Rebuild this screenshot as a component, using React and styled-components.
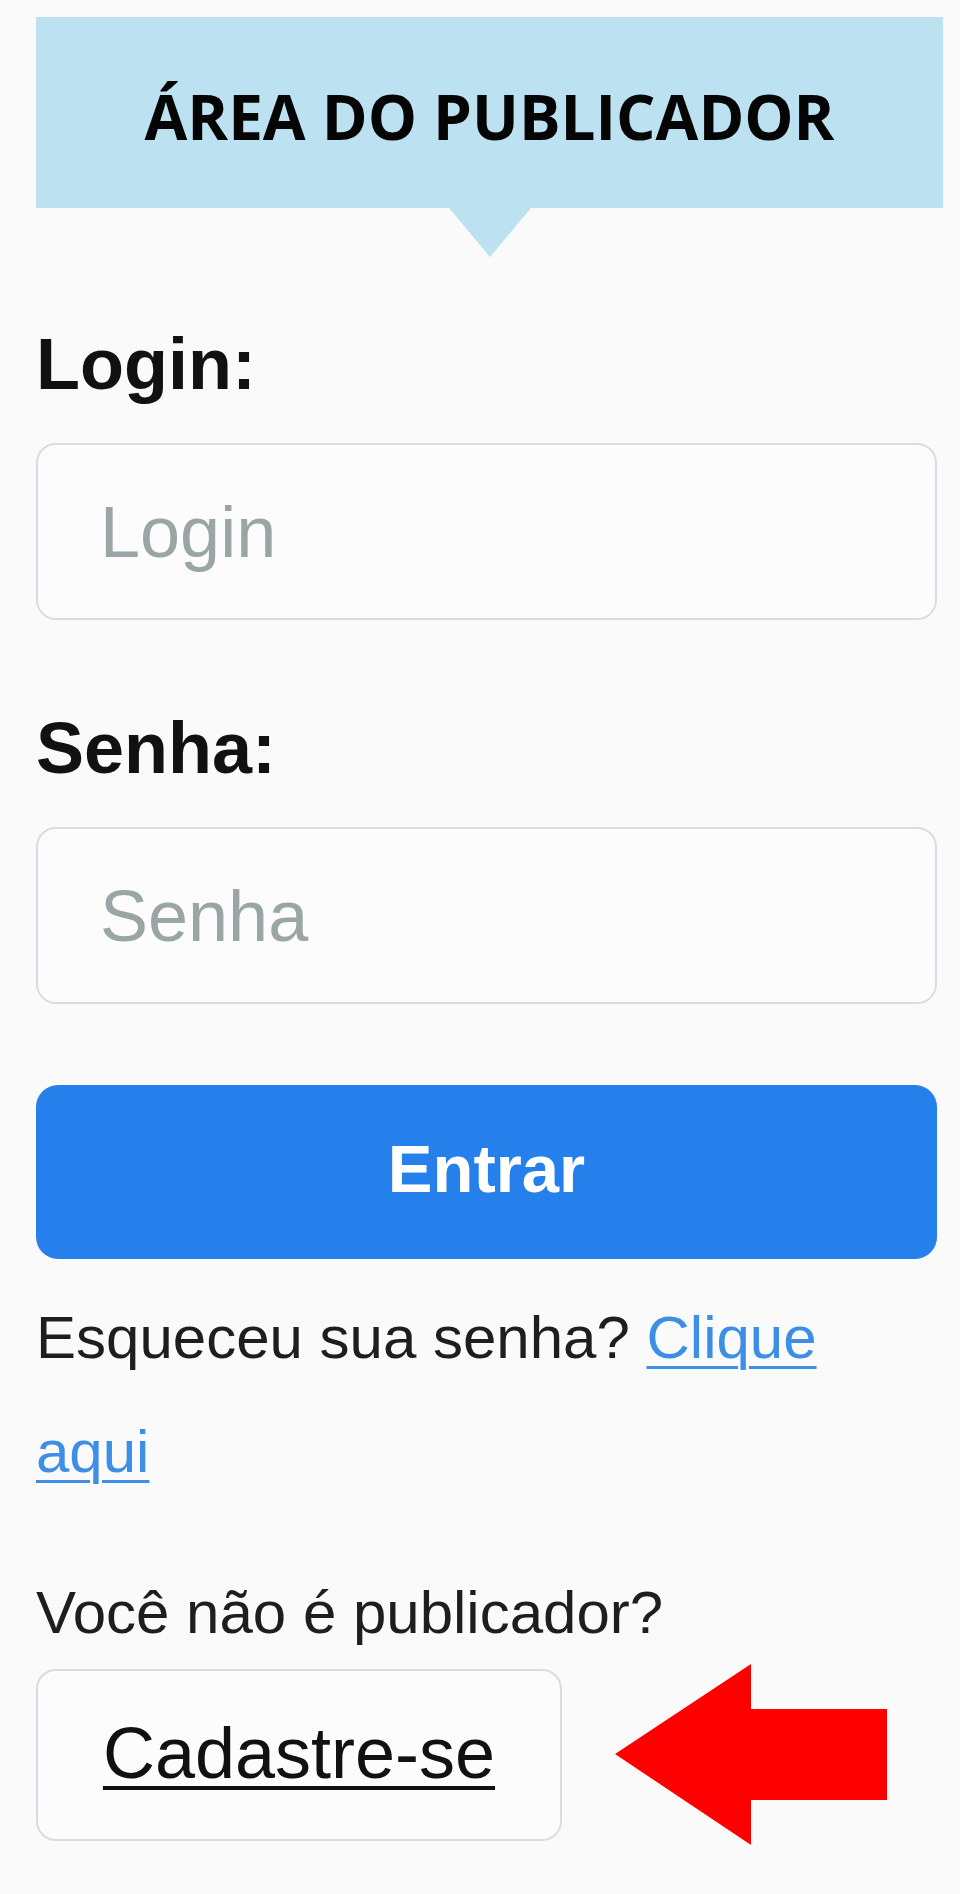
import React from "react";
import styled, { createGlobalStyle } from "styled-components";

const Global = createGlobalStyle`
  html, body { margin: 0; padding: 0; background: #fafafa; }
  body { font-family: "Liberation Sans", Arial, sans-serif; }
  * { box-sizing: border-box; }
`;

const Page = styled.div`
  padding: 17px 17px 40px 36px;
  width: 960px;
  min-height: 1894px;
  background: #fafafa;
`;

const Banner = styled.div`
  position: relative;
  height: 191px;
  background: #bce2f1;
  display: flex;
  align-items: center;
  justify-content: center;
  &::after {
    content: "";
    position: absolute;
    top: 100%;
    left: 50%;
    transform: translateX(-50%);
    border-left: 41px solid transparent;
    border-right: 41px solid transparent;
    border-top: 49px solid #bce2f1;
  }
`;

const BannerTitle = styled.h2`
  margin: 6px 0 0 0;
  font-family: "Open Sans", "DejaVu Sans", sans-serif;
  font-weight: 700;
  font-size: 62px;
  line-height: 1;
  color: #050505;
`;

const Form = styled.form`
  display: flex;
  flex-direction: column;
  width: 901px;
`;

const Label = styled.label`
  display: block;
  margin-top: ${(p) => p.$top}px;
  font-size: 72px;
  font-weight: 700;
  line-height: 80px;
  color: #111;
`;

const Field = styled.input`
  display: block;
  margin-top: 39px;
  width: 100%;
  height: 177px;
  padding: 0 0 0 62px;
  border: 2px solid #d6dfdf;
  border-radius: 20px;
  background: #fcfcfc;
  font-family: "Liberation Sans", Arial, sans-serif;
  font-size: 72px;
  color: #333;
  outline: none;
  &::placeholder { color: #9aa5a6; }
`;

const Submit = styled.button`
  margin-top: 81px;
  width: 100%;
  height: 174px;
  border: none;
  border-radius: 22px;
  background: #2680eb;
  color: #fff;
  font-family: "Liberation Sans", Arial, sans-serif;
  font-weight: 700;
  font-size: 67px;
  padding: 0 0 8px 0;
  cursor: pointer;
`;

const Text = styled.p`
  margin: ${(p) => p.$top}px 0 0 0;
  font-size: 60px;
  line-height: ${(p) => p.$lh}px;
  color: #1e1e1e;
`;

const Link = styled.a`
  color: #3d8fe6;
  text-decoration: underline;
  text-decoration-thickness: 3px;
  text-underline-offset: 8px;
`;

const SignupRow = styled.div`
  display: flex;
  align-items: center;
  gap: 53px;
  margin-top: 11px;
`;

const SignupButton = styled.a`
  display: flex;
  align-items: center;
  justify-content: center;
  width: 526px;
  height: 172px;
  border: 2px solid #d6dfdf;
  border-radius: 20px;
  background: #fcfcfc;
  color: #111;
  font-size: 72px;
  text-decoration: underline;
  text-decoration-thickness: 4px;
  text-underline-offset: 8px;
  padding-bottom: 4px;
`;

const Arrow = () => (
  <svg width="272" height="181" viewBox="0 0 272 181" aria-hidden="true">
    <polygon points="0,90 136,0 136,45 272,45 272,136 136,136 136,181" fill="#ff0000" />
  </svg>
);

export default function App() {
  return (
    <>
      <Global />
      <Page>
        <Banner>
          <BannerTitle>ÁREA DO PUBLICADOR</BannerTitle>
        </Banner>
        <Form onSubmit={(e) => e.preventDefault()}>
          <Label $top={116} htmlFor="login">Login:</Label>
          <Field id="login" type="text" placeholder="Login" />
          <Label $top={88} htmlFor="senha">Senha:</Label>
          <Field id="senha" type="password" placeholder="Senha" />
          <Submit type="submit">Entrar</Submit>
          <Text $top={22} $lh={114}>
            Esqueceu sua senha? <Link href="#">Clique aqui</Link>
          </Text>
          <Text $top={64} $lh={80}>Você não é publicador?</Text>
          <SignupRow>
            <SignupButton href="#">Cadastre-se</SignupButton>
            <Arrow />
          </SignupRow>
        </Form>
      </Page>
    </>
  );
}
